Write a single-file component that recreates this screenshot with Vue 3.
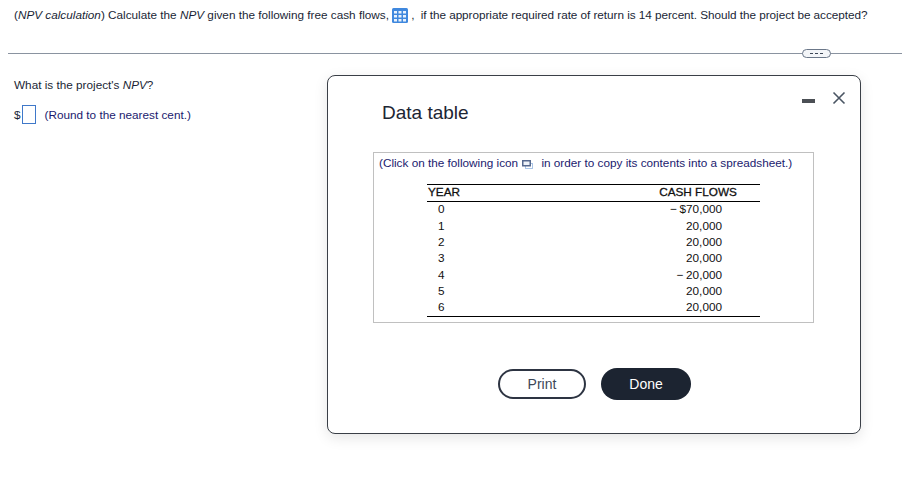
<template>
  <div class="page">
    <p class="question">
      (<i>NPV calculation</i>) Calculate the <i>NPV</i> given the following free cash flows,
      <svg class="table-icon" width="16" height="15" viewBox="0 0 16 15">
        <rect x="0" y="0" width="16" height="15" rx="1.5" fill="#3f88de" />
        <g fill="#e9f2fc">
          <rect x="2" y="3" width="3" height="2.5" />
          <rect x="6.5" y="3" width="3" height="2.5" />
          <rect x="11" y="3" width="3" height="2.5" />
          <rect x="2" y="7" width="3" height="2.5" />
          <rect x="6.5" y="7" width="3" height="2.5" />
          <rect x="11" y="7" width="3" height="2.5" />
          <rect x="2" y="11" width="3" height="2.5" />
          <rect x="6.5" y="11" width="3" height="2.5" />
          <rect x="11" y="11" width="3" height="2.5" />
        </g>
      </svg>, <span class="tail">if the appropriate required rate of return is 14 percent. Should the project be accepted?</span>
    </p>

    <div class="divider">
      <span class="more-pill"><span></span><span></span><span></span></span>
    </div>

    <div class="answer">
      <p class="prompt">What is the project's <i>NPV</i>?</p>
      <div class="answer-row">
        <span>$</span>
        <span class="answer-box"></span>
        <span class="hint">(Round to the nearest cent.)</span>
      </div>
    </div>

    <div class="modal">
      <div class="modal-controls">
        <span class="minimize"></span>
        <svg width="14" height="14" viewBox="0 0 14 14">
          <path d="M1.5 1.5l11 11M12.5 1.5l-11 11" stroke="#4a5563" stroke-width="1.6" fill="none" />
        </svg>
      </div>
      <h2 class="modal-title">Data table</h2>

      <div class="data-box">
        <p class="copy-note">
          (Click on the following icon
          <svg class="copy-icon" width="11" height="9" viewBox="0 0 11 9">
            <rect x="3.5" y="3.5" width="7" height="5" fill="#ffffff" stroke="#a9c4e6" />
            <rect x="0.75" y="0.75" width="7.5" height="5" fill="#eef2f8" stroke="#56698e" stroke-width="1.5" />
          </svg>
          <span class="after-icon">in order to copy its contents into a spreadsheet.)</span>
        </p>
        <table class="flows">
          <thead>
            <tr>
              <th class="year-col">YEAR</th>
              <th class="cash-col">CASH FLOWS</th>
            </tr>
          </thead>
          <tbody>
            <tr v-for="row in rows" :key="row.year">
              <td class="year-cell">{{ row.year }}</td>
              <td class="cash-cell">{{ row.cash }}</td>
            </tr>
          </tbody>
        </table>
      </div>

      <div class="modal-actions">
        <button class="btn btn-print">Print</button>
        <button class="btn btn-done">Done</button>
      </div>
    </div>
  </div>
</template>

<script setup>
const rows = [
  { year: 0, cash: '−\u2009$70,000' },
  { year: 1, cash: '20,000' },
  { year: 2, cash: '20,000' },
  { year: 3, cash: '20,000' },
  { year: 4, cash: '−\u200920,000' },
  { year: 5, cash: '20,000' },
  { year: 6, cash: '20,000' }
]
</script>

<style>
html, body {
  margin: 0;
  background: #ffffff;
}
</style>

<style scoped>
.page {
  position: relative;
  width: 902px;
  height: 495px;
  overflow: hidden;
  font-family: "Liberation Sans", Arial, sans-serif;
  font-size: 11.75px;
  color: #1a1f36;
}

p {
  margin: 0;
}

.question {
  padding: 7px 0 0 14px;
  height: 53px;
  box-sizing: border-box;
  line-height: 16px;
  white-space: nowrap;
}

.table-icon {
  vertical-align: -4px;
  margin-right: 3px;
}

.tail {
  margin-left: 3px;
  letter-spacing: -0.045px;
}

.divider {
  margin-left: 8px;
  height: 1px;
  background: #8a93a0;
  display: flex;
  align-items: center;
  justify-content: flex-end;
  padding-right: 71px;
}

.more-pill {
  width: 27px;
  height: 7px;
  border: 1px solid #6b7789;
  border-radius: 5px;
  background: #f3f5f8;
  display: flex;
  align-items: center;
  justify-content: center;
  gap: 2px;
}

.more-pill span {
  width: 3px;
  height: 1px;
  background: #3d4757;
}

.answer {
  padding: 23px 0 0 14px;
}

.prompt {
  line-height: 16px;
}

.answer-row {
  display: flex;
  align-items: center;
  margin-top: 12px;
  height: 19px;
}

.answer-box {
  width: 12px;
  height: 17px;
  border: 1px solid #3f78c9;
  margin-left: 1px;
}

.hint {
  margin-left: 9px;
  color: #1a1a6e;
}

.modal {
  position: absolute;
  left: 327px;
  top: 75px;
  width: 534px;
  height: 359px;
  box-sizing: border-box;
  background: #ffffff;
  border: 1px solid #3a3f47;
  border-radius: 8px;
  box-shadow: 0 4px 14px rgba(0, 0, 0, 0.1);
  padding: 25px 46px 0 54px;
}

.modal-controls {
  position: absolute;
  top: 15px;
  right: 14px;
  display: flex;
  align-items: center;
  gap: 17px;
}

.minimize {
  width: 13px;
  height: 4px;
  background: #4b4f55;
  margin-top: 6px;
}

.modal-title {
  margin: 0;
  font-size: 19px;
  font-weight: 400;
  line-height: 24px;
  color: #1c2533;
}

.data-box {
  margin: 27px 0 0 -9px;
  width: 441px;
  height: 171px;
  box-sizing: border-box;
  border: 1px solid #c0c0c0;
  padding: 2px 0 0 5px;
}

.copy-note {
  line-height: 15px;
  color: #1a1a6e;
  white-space: nowrap;
}

.copy-icon {
  vertical-align: -2px;
  margin: 0 1px;
}

.after-icon {
  margin-left: 7px;
}

.flows {
  border-collapse: collapse;
  margin: 14px 0 0 48px;
  width: 333px;
  font-size: 11.75px;
  color: #111111;
  border-bottom: 1px solid #000000;
}

.flows th {
  border-top: 1px solid #000000;
  border-bottom: 1px solid #000000;
  padding: 0 0 3px;
  height: 13px;
  font-weight: 400;
  line-height: 13px;
  -webkit-text-stroke: 0.3px #111111;
}

.year-col {
  width: 30px;
  text-align: left;
  padding-left: 1px !important;
}

.cash-col {
  text-align: center;
  padding-left: 198px !important;
  padding-right: 22px !important;
}

.flows td {
  padding: 0;
  height: 16.2px;
  line-height: 13px;
  vertical-align: top;
}

.flows tbody tr:first-child td {
  height: 17px;
}

.year-cell {
  padding-left: 11px !important;
  text-align: left;
}

.cash-cell {
  text-align: right;
  padding-right: 38px !important;
}

.modal-actions {
  display: flex;
  align-items: center;
  gap: 15px;
  margin: 45px 0 0 116px;
}

.btn {
  font-family: inherit;
  font-size: 14px;
  border-radius: 16px;
  cursor: pointer;
  padding: 0;
}

.btn-print {
  width: 88px;
  height: 30px;
  background: #ffffff;
  border: 2px solid #2d3442;
  color: #3d4757;
}

.btn-done {
  width: 90px;
  height: 32px;
  background: #1c2431;
  border: none;
  color: #ffffff;
}
</style>
